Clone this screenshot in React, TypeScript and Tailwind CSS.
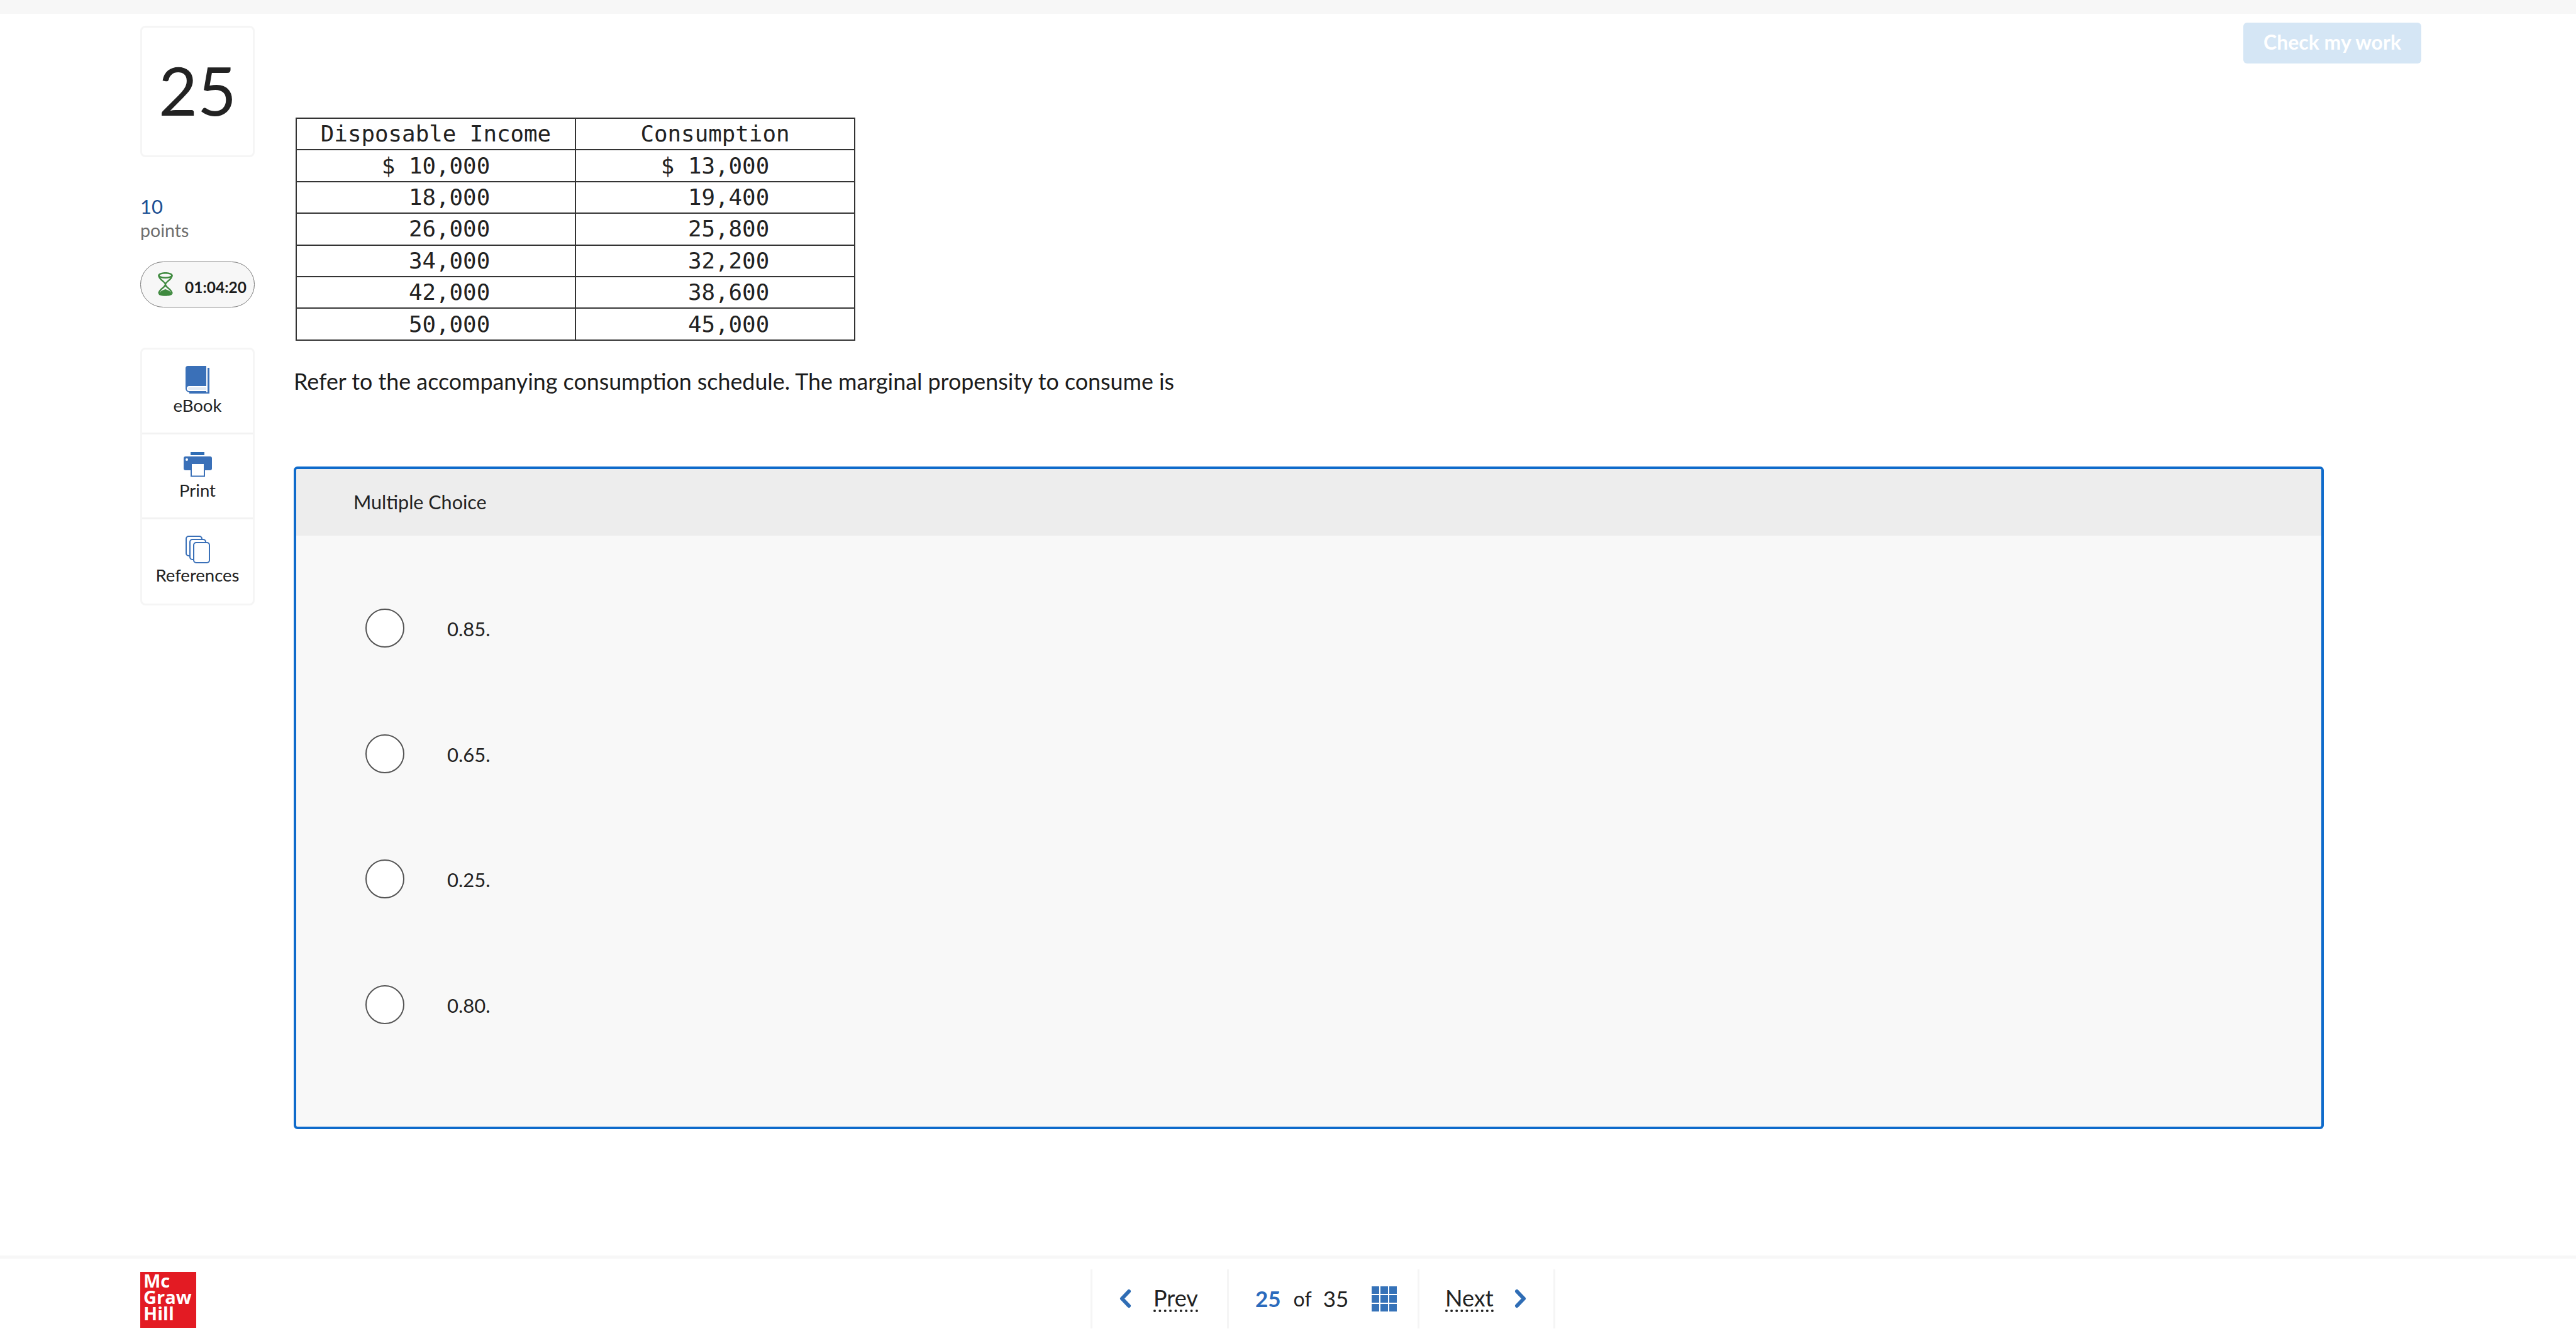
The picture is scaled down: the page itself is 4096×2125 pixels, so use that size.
const rows = [
  ['$ 10,000', '$ 13,000'],
  ['  18,000', '  19,400'],
  ['  26,000', '  25,800'],
  ['  34,000', '  32,200'],
  ['  42,000', '  38,600'],
  ['  50,000', '  45,000'],
]

const choices = ['0.85.', '0.65.', '0.25.', '0.80.']

function BookIcon() {
  return (
    <svg width="39" height="44" viewBox="0 0 39 44">
      <path d="M4 0H33V32H6a3.5 3.5 0 0 0 0 8H33V42H6a6 6 0 0 1-6-6V4a4 4 0 0 1 4-4z" fill="#3a70b8" />
      <path d="M6 34H33V38H6a2 2 0 0 1 0-4z" fill="#3a70b8" fillOpacity="0.15" />
      <path d="M35 3H38V44H6V42H35z" fill="#3a70b8" />
    </svg>
  )
}

function PrintIcon() {
  return (
    <svg width="45" height="40" viewBox="0 0 45 40">
      <rect x="11" y="0" width="22" height="5" fill="#2f6db5" />
      <rect x="0" y="7" width="45" height="22" rx="3" fill="#3a70b8" />
      <circle cx="5" cy="12" r="2" fill="#fff" />
      <rect x="12" y="18" width="21" height="20.5" fill="#fff" stroke="#3a70b8" strokeWidth="2" />
    </svg>
  )
}

function ReferencesIcon() {
  return (
    <svg width="39" height="44" viewBox="0 0 39 44" fill="#fff" stroke="#3a70b8" strokeWidth="2">
      <rect x="1" y="1" width="25" height="31" rx="4" />
      <rect x="7" y="6" width="25" height="32" rx="4" />
      <rect x="13" y="11" width="25" height="32" rx="4" />
    </svg>
  )
}

function Hourglass() {
  return (
    <svg width="24" height="39" viewBox="0 0 24 39" fill="none" stroke="#3f8a3f" strokeWidth="2.5">
      <ellipse cx="12" cy="5" rx="10.5" ry="3.8" />
      <path d="M1.5 5c0 7 10.5 10 10.5 14.5S1.5 27 1.5 34M22.5 5c0 7-10.500 10-10.500 14.500S22.500 27 22.500 34" />
      <path d="M1.500 35.500C3 30 9 28 12 27c3 1 9 3 10.500 8.500c-3 3-18 3-21 0z" fill="#3f8a3f" stroke="none" />
    </svg>
  )
}

function Chevron({ right }: { right?: boolean }) {
  return (
    <svg width="19" height="31" viewBox="0 0 19 31" fill="none" stroke="#2f6db5" strokeWidth="6" strokeLinecap="round" strokeLinejoin="round">
      <path d={right ? 'M4 4l11 11.500L4 27' : 'M15 4L4 15.500 15 27'} />
    </svg>
  )
}

function GridIcon() {
  return (
    <div className="grid grid-cols-3 gap-[2px] w-[40px] h-[40px]">
      {Array.from({ length: 9 }).map((_, i) => (
        <div key={i} className="bg-[#3572b8]" />
      ))}
    </div>
  )
}

function ToolButton({ icon, label, last }: { icon: React.ReactNode; label: string; last?: boolean }) {
  return (
    <div className={`h-[135px] flex flex-col items-center pt-[25px] ${last ? '' : 'border-b-[3px] border-[#f2f2f2]'}`}>
      <div className="h-[46px] flex items-center">{icon}</div>
      <span className="text-[27.500px] leading-[36px] text-[#222]">{label}</span>
    </div>
  )
}

export default function App() {
  return (
    <div className="w-[4096px] h-[2125px] flex flex-col bg-white overflow-hidden font-[Lato,sans-serif] text-[#222]">
      <div className="h-[22px] bg-[#f7f7f7]" />

      <div className="flex flex-1 pl-[223px]">
        {/* left rail */}
        <div className="w-[182px] pt-[19px]">
          <div className="h-[209px] pb-[6px] rounded-[8px] border-[3px] border-[#f5f5f5] flex items-center justify-center text-[107px] leading-none">
            25
          </div>
          <div className="mt-[60px] text-[31px] leading-[36px] text-[#1c4f93]">10</div>
          <div className="mt-[2px] text-[28.500px] leading-[36px] text-[#6e6e6e]">points</div>
          <div className="mt-[32px] h-[73px] rounded-full border-[1.500px] border-[#777] bg-[#f7f7f7] flex items-center pl-[27px]">
            <Hourglass />
            <span className="ml-[19px] mt-[10px] text-[24.500px] font-bold text-[#1c1c1c]">01:04:20</span>
          </div>
          <div className="mt-[64px] h-[410px] rounded-[8px] border-[3px] border-[#f5f5f5]">
            <ToolButton icon={<BookIcon />} label="eBook" />
            <ToolButton icon={<PrintIcon />} label="Print" />
            <ToolButton icon={<ReferencesIcon />} label="References" last />
          </div>
        </div>

        {/* question */}
        <div className="w-[3383px] ml-[62px] pt-[14px] flex flex-col">
          <div className="self-end w-[283px] h-[65px] pb-[3px] rounded-[6px] bg-[#d5e6f5] text-white font-bold text-[32px] flex items-center justify-center">
            Check my work
          </div>

          <table className="mt-[86px] ml-[3px] w-[890px] h-[353px] border-collapse table-fixed font-['DejaVu_Sans_Mono',monospace] text-[35.800px] leading-none text-[#222]">
            <thead>
              <tr className="h-[50.400px]">
                <th className="border-[2px] border-[#333] font-normal">Disposable Income</th>
                <th className="border-[2px] border-[#333] font-normal">Consumption</th>
              </tr>
            </thead>
            <tbody>
              {rows.map((row, index) => (
                <tr key={index} className="h-[50.400px]">
                  <td className="border-[2px] border-[#333] text-center whitespace-pre">{row[0]}</td>
                  <td className="border-[2px] border-[#333] text-center whitespace-pre">{row[1]}</td>
                </tr>
              ))}
            </tbody>
          </table>

          <p className="mt-[43px] text-[35.800px] leading-[44px] text-[#1c1c1c]">
            Refer to the accompanying consumption schedule. The marginal propensity to consume is
          </p>

          <div className="mt-[113px] w-[3228px] h-[1054px] border-[4px] border-[#0f6bcb] rounded-[6px] bg-[#f8f8f8] overflow-hidden">
            <div className="h-[106px] bg-[#ededed] flex items-center pl-[91px] text-[30.500px] text-[#222]">
              Multiple Choice
            </div>
            <div className="pt-[48px]">
              {choices.map((choice) => (
                <div key={choice} className="h-[199.500px] flex items-center pl-[110px]">
                  <div className="w-[62px] h-[62px] rounded-full border-[2px] border-[#555] bg-white" />
                  <span className="ml-[68px] mt-[2px] text-[31px] text-[#222]">{choice}</span>
                </div>
              ))}
            </div>
          </div>
        </div>
      </div>

      {/* footer */}
      <div className="h-[128px] border-t-[5px] border-[#f7f7f7] flex items-center pl-[223px]">
        <div className="w-[89px] h-[89px] mt-[8px] bg-[#e31b23] pl-[5px] pt-[1px] font-['Open_Sans',sans-serif] font-bold text-white text-[29px] leading-[26px]">
          Mc
          <br />
          Graw
          <br />
          Hill
        </div>
        <div className="ml-[1422px] mt-[4px] flex h-[94px] text-[36px]">
          <div className="w-[217px] border-l-[3px] border-[#f5f5f5] flex items-center pl-[43px]">
            <Chevron />
            <span className="ml-[35px] leading-[38px] border-b-[4px] border-dotted border-[#222]">Prev</span>
          </div>
          <div className="w-[303px] border-l-[3px] border-[#f5f5f5] flex items-center pl-[42px]">
            <span className="font-bold text-[#2b6bbd] text-[35px]">25</span>
            <span className="ml-[20px] text-[32px]">of</span>
            <span className="ml-[18px] text-[35px]">35</span>
            <div className="ml-[37px]">
              <GridIcon />
            </div>
          </div>
          <div className="w-[219px] border-x-[3px] border-[#f5f5f5] flex items-center pl-[41px]">
            <span className="leading-[38px] border-b-[4px] border-dotted border-[#222]">Next</span>
            <span className="ml-[33px] flex">
              <Chevron right />
            </span>
          </div>
        </div>
      </div>
    </div>
  )
}
